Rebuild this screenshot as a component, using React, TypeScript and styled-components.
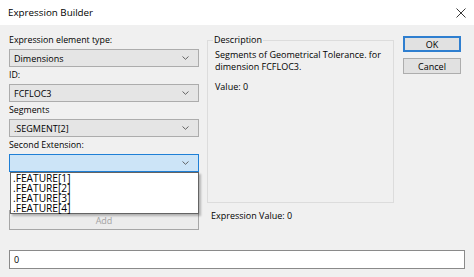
import React from 'react'
import styled, { createGlobalStyle } from 'styled-components'

const GlobalStyle = createGlobalStyle`
  html, body {
    margin: 0;
    padding: 0;
    background: #f0f0f0;
  }
  body {
    font-family: 'Segoe UI', 'Open Sans', 'Noto Sans', sans-serif;
    font-size: 9px;
    color: #000000;
  }
`

const Window = styled.div`
  width: 474px;
  height: 277px;
  display: flex;
  flex-direction: column;
  background: #f0f0f0;
  overflow: hidden;
`

// タイトルバー
const TitleBar = styled.div`
  height: 25px;
  flex: none;
  background: #ffffff;
  display: flex;
  align-items: center;
  justify-content: space-between;
  padding: 0 8px;
`

const Title = styled.span`
  font-size: 9.8px;
`

const Main = styled.div`
  display: grid;
  grid-template-columns: 190px 187px 59px;
  column-gap: 8px;
  padding: 9px 9px 0;
  align-items: start;
`

const LeftColumn = styled.div`
  display: flex;
  flex-direction: column;
`

const Field = styled.div`
  display: flex;
  flex-direction: column;
  margin-bottom: 2px;
`

const Label = styled.label`
  line-height: 12px;
  margin-bottom: 3px;
  font-size: 8.8px;
`

const ComboWrap = styled.div`
  position: relative;
`

const Combo = styled.div<{ active?: boolean }>`
  height: 18px;
  box-sizing: border-box;
  display: flex;
  align-items: center;
  justify-content: space-between;
  padding: 0 9px 0 4px;
  background: ${({ active }) => (active ? '#cce4f7' : '#e5e5e5')};
  border: 1px solid ${({ active }) => (active ? '#1e7fd6' : '#acacac')};
`

const DropList = styled.div`
  position: absolute;
  top: 100%;
  left: 1px;
  width: 189px;
  box-sizing: border-box;
  background: #ffffff;
  border: 1px solid #646464;
  box-shadow: 2px 2px 2px rgba(0, 0, 0, 0.25);
  z-index: 10;
`

const DropItem = styled.div`
  height: 10px;
  line-height: 10px;
  font-size: 10.2px;
  padding-left: 2px;
  white-space: nowrap;
`

const AddButton = styled.div`
  margin-top: 36px;
  height: 20px;
  box-sizing: border-box;
  display: flex;
  align-items: center;
  justify-content: center;
  background: #ececec;
  border: 1px solid #a6a6a6;
  color: #a3a3a3;
`

const RightColumn = styled.div`
  display: flex;
  flex-direction: column;
`

const GroupBox = styled.div`
  position: relative;
  margin-top: 6px;
  height: 163px;
  box-sizing: border-box;
  border: 1px solid #dcdcdc;
  padding: 8px 7px 0;
`

const GroupLegend = styled.span`
  position: absolute;
  top: -7px;
  left: 5px;
  padding: 0 1px;
  background: #f0f0f0;
  line-height: 12px;
`

const DescLine = styled.div`
  line-height: 12px;
`

const ValueLine = styled.div`
  line-height: 12px;
  margin-top: 8px;
`

const ExprValue = styled.div`
  margin: 7px 0 0 4px;
  line-height: 12px;
`

const ButtonColumn = styled.div`
  display: flex;
  flex-direction: column;
  gap: 6px;
  margin: 2px 0 0 1px;
`

const DialogButton = styled.div<{ primary?: boolean }>`
  height: 16px;
  box-sizing: border-box;
  display: flex;
  align-items: center;
  justify-content: center;
  background: #e1e1e1;
  border: ${({ primary }) => (primary ? '2px solid #2f7fd0' : '1px solid #adadad')};
`

const TextField = styled.div`
  margin: 20px 0 0 9px;
  width: 456px;
  height: 19px;
  box-sizing: border-box;
  background: #ffffff;
  border: 1px solid #8a8a8a;
  display: flex;
  align-items: center;
  padding-left: 4px;
`

const Chevron = () => (
  <svg width="7" height="4" viewBox="0 0 7 4">
    <path d="M0.5 0.5 L3.5 3.3 L6.5 0.5" fill="none" stroke="#555555" strokeWidth="0.9" />
  </svg>
)

const CloseIcon = () => (
  <svg width="10" height="10" viewBox="0 0 10 10">
    <path d="M0.5 0.5 L9.5 9.5 M9.5 0.5 L0.5 9.5" stroke="#222222" strokeWidth="0.9" />
  </svg>
)

const fields = [
  { label: 'Expression element type:', value: 'Dimensions' },
  { label: 'ID:', value: 'FCFLOC3' },
  { label: 'Segments', value: '.SEGMENT[2]' },
]

const features = ['.FEATURE[1]', '.FEATURE[2]', '.FEATURE[3]', '.FEATURE[4]']

export default function App() {
  return (
    <>
      <GlobalStyle />
      <Window>
        <TitleBar>
          <Title>Expression Builder</Title>
          <CloseIcon />
        </TitleBar>
        <Main>
          <LeftColumn>
            {fields.map((f) => (
              <Field key={f.label}>
                <Label>{f.label}</Label>
                <Combo>
                  <span>{f.value}</span>
                  <Chevron />
                </Combo>
              </Field>
            ))}
            <Field>
              <Label>Second Extension:</Label>
              <ComboWrap>
                <Combo active>
                  <span />
                  <Chevron />
                </Combo>
                <DropList>
                  {features.map((item) => (
                    <DropItem key={item}>{item}</DropItem>
                  ))}
                </DropList>
              </ComboWrap>
            </Field>
            <AddButton>Add</AddButton>
          </LeftColumn>
          <RightColumn>
            <GroupBox>
              <GroupLegend>Description</GroupLegend>
              <DescLine>Segments of Geometrical Tolerance. for</DescLine>
              <DescLine>dimension FCFLOC3.</DescLine>
              <ValueLine>Value: 0</ValueLine>
            </GroupBox>
            <ExprValue>Expression Value: 0</ExprValue>
          </RightColumn>
          <ButtonColumn>
            <DialogButton primary>OK</DialogButton>
            <DialogButton>Cancel</DialogButton>
          </ButtonColumn>
        </Main>
        <TextField>0</TextField>
      </Window>
    </>
  )
}
